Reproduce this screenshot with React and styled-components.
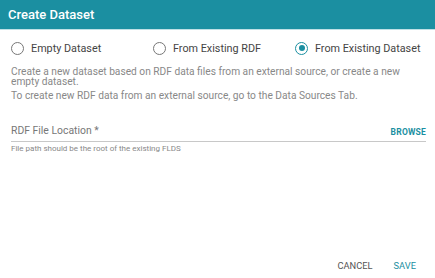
import React, { useState } from 'react';
import styled, { createGlobalStyle } from 'styled-components';

const Global = createGlobalStyle`
  html, body { margin: 0; padding: 0; background: #fff; }
  body { font-family: Roboto, "Liberation Sans", Arial, sans-serif; }
  * { box-sizing: border-box; }
`;

const Dialog = styled.div`
  width: 435px;
  height: 278px;
  display: flex;
  flex-direction: column;
  background: #fff;
`;

const Header = styled.div`
  height: 30px;
  background: #1b8fa1;
  color: #fff;
  font-size: 13px;
  font-weight: 500;
  display: flex;
  align-items: center;
  padding: 0 8px;
  border-bottom: 1px solid #bfe0e5;
`;

const Body = styled.div`
  flex: 1;
  padding: 9px 9px 0 11px;
  display: flex;
  flex-direction: column;
`;

const RadioRow = styled.div`
  display: grid;
  grid-template-columns: 142px 142px 1fr;
`;

const RadioLabel = styled.label`
  display: flex;
  align-items: center;
  gap: 7px;
  font-size: 10.8px;
  color: #444;
  height: 18px;
  white-space: nowrap;
  cursor: pointer;
`;

const Circle = styled.span`
  flex: none;
  width: 13px;
  height: 13px;
  border-radius: 50%;
  border: 1.5px solid ${p => (p.$on ? '#1b8fa1' : '#777')};
  display: flex;
  align-items: center;
  justify-content: center;
  &::after {
    content: '';
    width: 6px;
    height: 6px;
    border-radius: 50%;
    background: ${p => (p.$on ? '#1b8fa1' : 'transparent')};
  }
`;

const Desc = styled.p`
  margin: ${p => p.$top || 0}px 0 0;
  font-size: 10.2px;
  line-height: 10px;
  color: #888;
`;

const Field = styled.div`
  margin-top: 23px;
  display: flex;
  align-items: flex-end;
  justify-content: space-between;
  border-bottom: 1px solid #c8c8c8;
  padding-bottom: 4px;
`;

const FieldLabel = styled.span`
  font-size: 10.4px;
  color: #777;
`;

const Browse = styled.span`
  font-size: 8.5px;
  font-weight: 700;
  color: #1b8fa1;
  letter-spacing: 0.2px;
`;

const Helper = styled.div`
  margin-top: 2px;
  font-size: 8px;
  color: #888;
`;

const Footer = styled.div`
  display: flex;
  justify-content: flex-end;
  gap: 21px;
  padding: 0 19px 7px 0;
`;

const TextButton = styled.button`
  background: none;
  border: none;
  padding: 0;
  font-family: inherit;
  font-size: 9.3px;
  color: ${p => (p.$primary ? '#1b8fa1' : '#555')};
  cursor: pointer;
`;

const options = ['Empty Dataset', 'From Existing RDF', 'From Existing Dataset'];

export default function App() {
  const [sel, setSel] = useState(2);
  return (
    <Dialog>
      <Global />
      <Header>Create Dataset</Header>
      <Body>
        <RadioRow>
          {options.map((o, i) => (
            <RadioLabel key={o} onClick={() => setSel(i)}>
              <Circle $on={sel === i} />
              {o}
            </RadioLabel>
          ))}
        </RadioRow>
        <Desc $top={10}>
          Create a new dataset based on RDF data files from an external source, or create a new empty dataset.
        </Desc>
        <Desc $top={4}>To create new RDF data from an external source, go to the Data Sources Tab.</Desc>
        <Field>
          <FieldLabel>RDF File Location *</FieldLabel>
          <Browse>BROWSE</Browse>
        </Field>
        <Helper>File path should be the root of the existing FLDS</Helper>
      </Body>
      <Footer>
        <TextButton>CANCEL</TextButton>
        <TextButton $primary>SAVE</TextButton>
      </Footer>
    </Dialog>
  );
}
